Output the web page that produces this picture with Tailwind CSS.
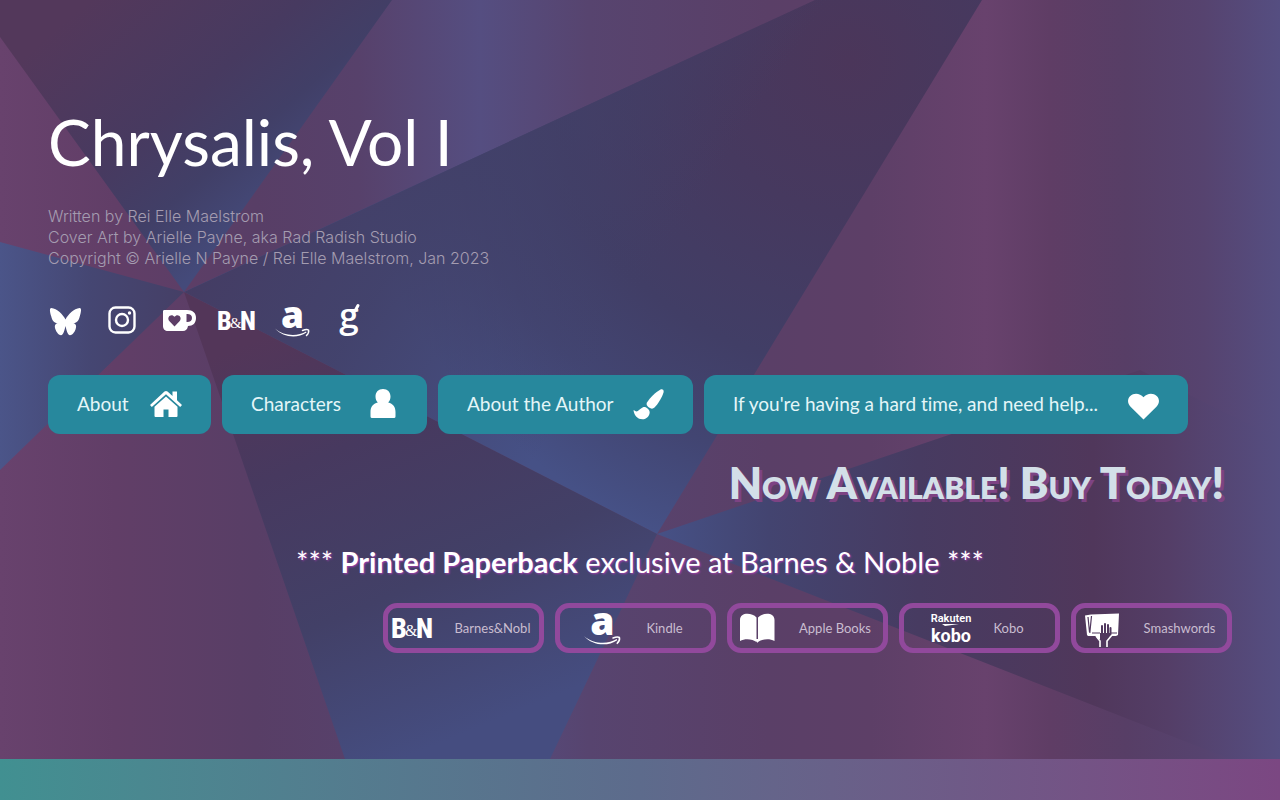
<!DOCTYPE html>
<html lang="en">
<head>
  <meta charset="UTF-8">
  <meta name="viewport" content="width=device-width, initial-scale=1.0">
  <title>Chrysalis, Vol I</title>
  <script src="https://cdn.jsdelivr.net/npm/@tailwindcss/browser@4"></script>
</head>
<body class="min-h-screen flex flex-col bg-[#5b3e65] font-[Lato,sans-serif] [font-variant-ligatures:none] text-white">

  <!-- Hero -->
  <main class="relative overflow-hidden px-12 pt-[102px] pb-[106px]">

    <!-- Faceted background -->
    <svg class="absolute inset-0 w-full h-full" viewBox="0 0 1280 759" preserveAspectRatio="none" aria-hidden="true">
      <defs>
        <linearGradient id="base" gradientUnits="userSpaceOnUse" x1="0" y1="0" x2="1280" y2="0">
          <stop offset="0" stop-color="#68426d"/>
          <stop offset=".09" stop-color="#613e67"/>
          <stop offset=".2" stop-color="#583e66"/>
          <stop offset=".28" stop-color="#57416b"/>
          <stop offset=".375" stop-color="#554e81"/>
          <stop offset=".46" stop-color="#57446f"/>
          <stop offset=".6" stop-color="#5a3f67"/>
          <stop offset=".68" stop-color="#5d3f67"/>
          <stop offset=".77" stop-color="#68426d"/>
          <stop offset=".82" stop-color="#5f3d65"/>
          <stop offset=".88" stop-color="#573e66"/>
          <stop offset=".94" stop-color="#56436f"/>
          <stop offset="1" stop-color="#554e81"/>
        </linearGradient>
        <linearGradient id="top" gradientUnits="userSpaceOnUse" x1="90" y1="0" x2="270" y2="210">
          <stop offset="0" stop-color="#53385b"/>
          <stop offset=".5" stop-color="#473a60"/>
          <stop offset=".75" stop-color="#413f67"/>
          <stop offset="1" stop-color="#444a7a"/>
        </linearGradient>
        <linearGradient id="left" gradientUnits="userSpaceOnUse" x1="0" y1="0" x2="184" y2="0">
          <stop offset="0" stop-color="#4b5589"/>
          <stop offset=".5" stop-color="#454672"/>
          <stop offset="1" stop-color="#453f66"/>
        </linearGradient>
        <radialGradient id="center" gradientUnits="userSpaceOnUse" cx="850" cy="60" r="510">
          <stop offset="0" stop-color="#4b365a"/>
          <stop offset=".3" stop-color="#46395f"/>
          <stop offset=".6" stop-color="#413e66"/>
          <stop offset=".8" stop-color="#424572"/>
          <stop offset="1" stop-color="#465186"/>
        </radialGradient>
        <linearGradient id="fadeLeft" gradientUnits="userSpaceOnUse" x1="184" y1="180" x2="560" y2="420">
          <stop offset="0" stop-color="#453a60"/>
          <stop offset=".5" stop-color="#424068" stop-opacity=".85"/>
          <stop offset="1" stop-color="#424068" stop-opacity="0"/>
        </linearGradient>
        <linearGradient id="bottom" gradientUnits="userSpaceOnUse" x1="230" y1="350" x2="400" y2="760">
          <stop offset="0" stop-color="#533659"/>
          <stop offset=".3" stop-color="#47395f"/>
          <stop offset=".65" stop-color="#424067"/>
          <stop offset="1" stop-color="#454d80"/>
        </linearGradient>
        <linearGradient id="right" gradientUnits="userSpaceOnUse" x1="657" y1="0" x2="1280" y2="0">
          <stop offset="0" stop-color="#465186"/>
          <stop offset=".18" stop-color="#434470"/>
          <stop offset=".42" stop-color="#473b61"/>
          <stop offset=".7" stop-color="#50375b"/>
          <stop offset=".82" stop-color="#543e67"/>
          <stop offset="1" stop-color="#554e81"/>
        </linearGradient>
      </defs>
      <rect width="1280" height="759" fill="url(#base)"/>
      <polygon points="0,0 392,0 184,292 0,37" fill="url(#top)"/>
      <polygon points="0,242 184,292 0,470" fill="url(#left)"/>
      <polygon points="184,292 815,0 982,0 657,534" fill="url(#center)"/>
      <polygon points="184,292 815,0 982,0 657,534" fill="url(#fadeLeft)"/>
      <polygon points="184,292 657,534 550,759 345,759" fill="url(#bottom)"/>
      <polygon points="657,534 1140,370 1280,440 1280,759 1230,759" fill="url(#right)"/>
    </svg>

    <div class="relative">
      <h1 class="text-[64px] leading-[80px] font-normal">Chrysalis, Vol I</h1>

      <p class="mt-6 text-base leading-[21px] font-light font-[Inter,sans-serif] text-[#a49cb0]">
        Written by Rei Elle Maelstrom<br>
        Cover Art by Arielle Payne, aka Rad Radish Studio<br>
        Copyright © Arielle N Payne / Rei Elle Maelstrom, Jan 2023
      </p>

      <!-- Social links -->
      <nav class="mt-[33px] flex gap-[21px]" aria-label="Social">
        <a href="#" aria-label="Bluesky">
          <svg class="size-9" viewBox="0 0 36 36" fill="#fff"><path d="M17.5 17.5C15 12.500 9 6.600 3.300 6C1.200 6 1.900 10 3.200 14.300C4 18 5.500 20.600 9.600 21.300C6.700 22 6.300 24.500 7.500 27.500C8.600 30.500 11 33.300 13 33.200C15.500 33 16.600 28 17.500 24C18.400 28 19.500 33 22 33.200C24 33.300 26.400 30.500 27.500 27.500C28.700 24.500 28.300 22 25.400 21.300C29.500 20.600 31 18 31.800 14.300C33.100 10 33.800 6 31.700 6C26 6.600 20 12.500 17.500 17.500Z"/></svg>
        </a>
        <a href="#" aria-label="Instagram">
          <svg class="size-9" viewBox="0 0 36 36" fill="none" stroke="#fff" stroke-width="2.400"><rect x="4.500" y="5.500" width="25" height="25" rx="6"/><circle cx="17" cy="18" r="6"/><circle cx="24.500" cy="11" r="1.700" fill="#fff" stroke="none"/></svg>
        </a>
        <a href="#" aria-label="Ko-fi">
          <svg class="size-9" viewBox="0 0 36 36"><path fill="#fff" fill-rule="evenodd" d="M2.500 8H25C31 8 34 11 34 16C34 21 31 24 26 24C25.500 27.500 23.500 29 21 29H6C3 29 1 27 1 24V9.500C1 8.500 1.500 8 2.500 8ZM24.500 12V20C28 20.200 30 19 30 16C30 13 28 11.800 24.500 12ZM12.500 24.500L17.500 19.300C21 15 15.500 10.800 12.500 14.800C9.500 10.800 4 15 7.500 19.300Z"/></svg>
        </a>
        <a href="#" aria-label="Barnes &amp; Noble">
          <svg class="size-9 overflow-visible" viewBox="0 0 36 36" fill="#fff"><text x="-2" y="28" font-family="'Roboto Condensed',Roboto,sans-serif" font-weight="800" font-size="26">B</text><text x="11" y="26" font-family="'Liberation Serif',serif" font-size="15">&amp;</text><text x="21" y="28" font-family="'Roboto Condensed',Roboto,sans-serif" font-weight="800" font-size="26">N</text></svg>
        </a>
        <a href="#" aria-label="Amazon">
          <svg class="size-9 overflow-visible" viewBox="0 0 36 36" fill="#fff"><text x="16.500" y="26" text-anchor="middle" font-family="'Open Sans',sans-serif" font-weight="800" font-size="37">a</text><path d="M-1 26.500C8 34.500 22 34.500 30 29.500L30.500 30.500C21 37 7 35.500 -1 26.500Z"/><path d="M26.500 28.500C29 27.500 31.500 27.300 32.500 28C33 29.500 32 32 30.500 33.500" fill="none" stroke="#fff" stroke-width="1.500" stroke-linecap="round"/></svg>
        </a>
        <a href="#" aria-label="Goodreads">
          <svg class="size-9 overflow-visible" viewBox="0 0 36 36" fill="#fff"><text x="16" y="26" text-anchor="middle" font-family="'Open Sans',sans-serif" font-weight="600" font-size="35">g</text><path d="M22 9L25 3.500" stroke="#fff" stroke-width="3" stroke-linecap="round"/></svg>
        </a>
      </nav>

      <!-- Page links -->
      <nav class="mt-[37px] flex flex-wrap gap-[11px] text-[19px] leading-6 text-[#e4f6f8]" aria-label="Pages">
        <a href="#" class="w-[163px] h-[59px] px-[29px] pb-0.5 rounded-xl bg-[#27889d] flex items-center justify-between whitespace-nowrap">
          About
          <svg class="w-8 h-8 shrink-0" viewBox="0 0 32 32" fill="#fff"><path d="M0 17L14.500 3.500Q16 2.300 17.500 3.500L22.500 8V3.500H27V12.200L32 17L30.200 19L16 6.200L1.800 19Z"/><path d="M4.500 18.800L16 8.500L27.500 18.800V28Q27.500 29 26.500 29H18.500V21.500H13.500V29H5.500Q4.500 29 4.500 28Z"/></svg>
        </a>
        <a href="#" class="w-[205px] h-[59px] px-[29px] pb-0.5 rounded-xl bg-[#27889d] flex items-center justify-between whitespace-nowrap">
          Characters
          <svg class="w-[29px] h-8 shrink-0" viewBox="0 0 29 32" fill="#fff"><path d="M14 1C9.500 1 6.500 4 6.500 8.500C6.500 11 7.300 13 8.800 14.500C4 15.500 1.500 19 1.500 24V28.500Q1.500 30 3 30H25Q26.500 30 26.500 28.500V24C26.500 19 24 15.500 19.200 14.500C20.700 13 21.500 11 21.500 8.500C21.500 4 18.500 1 14 1Z"/></svg>
        </a>
        <a href="#" class="w-[255px] h-[59px] px-[29px] pb-0.5 rounded-xl bg-[#27889d] flex items-center justify-between whitespace-nowrap">
          About the Author
          <svg class="w-[31px] h-8 shrink-0" viewBox="0 0 31 32" fill="#fff"><path d="M27.500 1.500C29.500 .5 31.200 2 30.500 4.500C29 9.500 25 16 21.500 19.500C20 21 18 21 16 19.500C14 18 13 16.500 14 14.500C17 9.500 22.500 4.500 27.500 1.500Z"/><path d="M10 19.300C12.500 18 16.500 21.300 16.700 24.200C16.500 28 13.500 31.300 9.500 31.300C4.500 31.300 1.300 27.500 .5 22.500C.8 21.900 1.500 22.300 2.200 23C4.500 24.800 6.500 21 10 19.300Z"/></svg>
        </a>
        <a href="#" class="w-[484px] h-[59px] px-[29px] pb-0.5 rounded-xl bg-[#27889d] flex items-center justify-between whitespace-nowrap">
          If you're having a hard time, and need help...
          <svg class="w-[31px] h-8 shrink-0" viewBox="0 0 31 32" fill="#fff"><path d="M15.500 31.500L2.800 19C-.8 15.200 -.8 10.800 2.300 7.900C6 4.500 12 5 15.500 9.300C19 5 25 4.500 28.700 7.900C31.800 10.800 31.800 15.200 28.200 19Z"/></svg>
        </a>
      </nav>

      <h2 class="mt-[19px] pr-2 text-right text-[43px] leading-[60px] font-extrabold text-[#d3dfe8] [font-variant-caps:small-caps] [text-shadow:3px_3px_0_#7d4383]">Now Available! Buy Today!</h2>

      <p class="mt-[29px] text-center text-[29px] leading-10 [text-shadow:1px_1px_2px_#a33fae]">*** <strong class="font-bold">Printed Paperback</strong> exclusive at Barnes &amp; Noble ***</p>

      <!-- Stores -->
      <div class="mt-[21px] flex flex-wrap justify-end gap-[11px] text-[13px] leading-5 text-[#c9bdd0]">
        <a href="#" class="w-[161px] h-[50px] pr-1 rounded-[14px] border-5 border-[#91499c] flex items-center justify-center gap-6 whitespace-nowrap">
          <svg class="w-[38px] h-10 shrink-0 overflow-visible" viewBox="0 0 38 40" fill="#fff"><text x="-2" y="30" font-family="'Roboto Condensed',Roboto,sans-serif" font-weight="800" font-size="28">B</text><text x="12" y="28" font-family="'Liberation Serif',serif" font-size="16">&amp;</text><text x="23" y="30" font-family="'Roboto Condensed',Roboto,sans-serif" font-weight="800" font-size="28">N</text></svg>
          Barnes&amp;Nobl
        </a>
        <a href="#" class="w-[161px] h-[50px] pr-1 rounded-[14px] border-5 border-[#91499c] flex items-center justify-center gap-6 whitespace-nowrap">
          <svg class="w-[38px] h-10 shrink-0 overflow-visible" viewBox="-1 0 36 36" fill="#fff"><text x="16.500" y="25" text-anchor="middle" font-family="'Open Sans',sans-serif" font-weight="800" font-size="37">a</text><path d="M-1 25.500C8 33.500 22 33.500 30 28.500L30.500 29.500C21 36 7 34.500 -1 25.500Z"/><path d="M26.500 27.500C29 26.500 31.500 26.300 32.500 27C33 28.500 32 31 30.500 32.500" fill="none" stroke="#fff" stroke-width="1.500" stroke-linecap="round"/></svg>
          Kindle
        </a>
        <a href="#" class="w-[161px] h-[50px] pr-1 rounded-[14px] border-5 border-[#91499c] flex items-center justify-center gap-6 whitespace-nowrap">
          <svg class="w-[35px] h-10 shrink-0" viewBox="0 0 35 40" fill="#fff"><path d="M16.500 9.500V34C13 31 5 30 0 33V12C0 4 12 4.500 16.500 9.500Z"/><path d="M18 9.500V34C21.500 31 29.500 30 34.500 33V12C34.500 4 22.500 4.500 18 9.500Z"/><path d="M15 31H19.500L17.300 35Z"/></svg>
          Apple Books
        </a>
        <a href="#" class="w-[161px] h-[50px] pr-1 rounded-[14px] border-5 border-[#91499c] flex items-center justify-center gap-6 whitespace-nowrap">
          <svg class="w-[38px] h-10 shrink-0 overflow-visible" viewBox="0 0 38 40" fill="#fff"><text x="20" y="14" text-anchor="middle" font-family="Roboto,sans-serif" font-weight="600" font-size="11">Rakuten</text><path d="M11 16H28L14 18Z"/><text x="20" y="34" text-anchor="middle" font-family="Roboto,sans-serif" font-weight="700" font-size="18">kobo</text></svg>
          Kobo
        </a>
        <a href="#" class="w-[161px] h-[50px] pr-1 rounded-[14px] border-5 border-[#91499c] flex items-center justify-center gap-6 whitespace-nowrap">
          <svg class="w-9 h-10 shrink-0" viewBox="0 0 36 40"><path fill="#fff" d="M1 7.500L7 6.500L35 5.500L34 27L32 28L26 28L24 31H14L12 28H4L3 27Z"/><path fill="none" stroke="#51385e" stroke-width="1.200" d="M4 9L5.500 24M7.500 8L5.800 25M8 25H16M27 25H33"/><path fill="none" stroke="#51385e" stroke-width="2" stroke-linecap="round" d="M18 18V27M21 16V27M24 17V27M26.500 20V27"/><path fill="#51385e" d="M16 25H27L25 31L23 38H18L16 31Z"/><path fill="none" stroke="#fff" stroke-width="1.600" d="M12 28L16 33V39M28 27L23 33V39"/></svg>
          Smashwords
        </a>
      </div>
    </div>
  </main>

  <!-- Start of the next section -->
  <section class="flex-1 min-h-10 bg-linear-to-r from-[#419091] via-[#5d6b8c] to-[#7b4782]"></section>

</body>
</html>
